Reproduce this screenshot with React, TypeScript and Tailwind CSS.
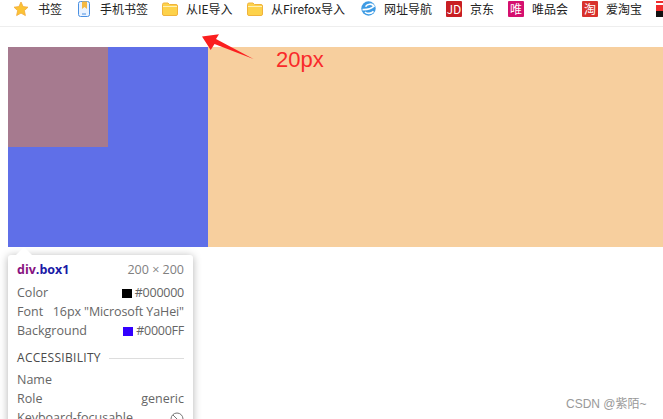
import React from 'react';

const cn = '"Noto Sans CJK SC", "Noto Sans", sans-serif';

const Folder = () => (
  <svg width="16" height="14" viewBox="0 0 16 14">
    <path d="M0.5 2.5 Q0.5 1 2 1 H6 L7.5 2.5 H14 Q15.5 2.5 15.5 4 V12 Q15.5 13.5 14 13.5 H2 Q0.5 13.5 0.5 12 Z" fill="#fdd24a" stroke="#f0b33c" />
    <path d="M1 4.5 H15" stroke="#fff0b8" />
  </svg>
);

const Star = () => (
  <svg width="16" height="16" viewBox="0 0 16 16">
    <path d="M8 1 L10.1 5.6 L15 6.2 L11.4 9.6 L12.4 14.6 L8 12.1 L3.6 14.6 L4.6 9.6 L1 6.2 L5.9 5.6 Z" fill="#fbc334" stroke="#f3a93a" strokeWidth="0.8" strokeLinejoin="round" />
  </svg>
);

const Phone = () => (
  <svg width="12" height="16" viewBox="0 0 12 16">
    <rect x="0.5" y="0.5" width="11" height="15" rx="2" fill="#eaf3ff" stroke="#4a90e2" />
    <path d="M4 0.5 H9 V8 L6.5 6 L4 8 Z" fill="#f5b942" />
    <path d="M4 13 H8" stroke="#4a90e2" />
  </svg>
);

// blue "e" browser logo
const Globe = () => (
  <svg width="15" height="15" viewBox="0 0 15 15">
    <circle cx="7.5" cy="7.5" r="7.2" fill="#3d9be4" />
    <path d="M1.5 8.6 C6 8.8 10.5 7.6 13 5.2 C11 2.4 6.5 2.6 4.5 5.6 M4 11 C6 13 10 13 12.5 10.4" stroke="#ffffff" strokeWidth="1.7" fill="none" />
  </svg>
);

const Badge = ({ bg, label }: { bg: string; label: string }) => (
  <span className="flex h-4 w-4 items-center justify-center overflow-hidden rounded-[1px] text-[12px] leading-none text-white" style={{ background: bg }}>
    {label}
  </span>
);

const bookmarks = [
  { icon: <Star />, label: '书签', w: 'w-[65px]', iw: 'w-[25px]' },
  { icon: <Phone />, label: '手机书签', w: 'w-[84px]', iw: 'w-[22px]' },
  { icon: <Folder />, label: '从IE导入', w: 'w-[85px]', iw: 'w-[24px]' },
  { icon: <Folder />, label: '从Firefox导入', w: 'w-[114px]', iw: 'w-[24px]' },
  { icon: <Globe />, label: '网址导航', w: 'w-[85px]', iw: 'w-[23px]' },
  { icon: <Badge bg="#c81e23" label="JD" />, label: '京东', w: 'w-[62px]', iw: 'w-[24px]' },
  { icon: <Badge bg="#d5106f" label="唯" />, label: '唯品会', w: 'w-[74px]', iw: 'w-[24px]' },
  { icon: <Badge bg="#d8322c" label="淘" />, label: '爱淘宝', w: 'w-[74px]', iw: 'w-[24px]' },
];

const Row = ({ label, children }: { label: string; children: React.ReactNode }) => (
  <div className="flex h-[19px] items-center justify-between text-[12.5px] text-[#666666]">
    <span>{label}</span>
    {children}
  </div>
);

export default function App() {
  return (
    <div className="relative h-[419px] w-[663px] overflow-hidden bg-white" style={{ fontFamily: '"Open Sans", "Noto Sans CJK SC", sans-serif' }}>
      {/* Bookmarks bar */}
      <div className="flex h-[27px] items-center overflow-hidden whitespace-nowrap border-b border-[#eeeeee] pl-[13px] pb-[9px] text-[12px] text-[#222222]" style={{ fontFamily: cn }}>
        {bookmarks.map(b => (
          <div key={b.label} className={`flex shrink-0 items-center ${b.w}`}>
            <span className={`flex shrink-0 items-center ${b.iw}`}>{b.icon}</span>
            <span>{b.label}</span>
          </div>
        ))}
        <div className="flex h-4 w-4 shrink-0 flex-col">
          <span className="h-[2px] bg-[#f02b2b]" />
          <span className="h-[2px] bg-white" />
          <span className="h-[6px] bg-[#f02b2b]" />
          <span className="h-[6px] bg-[#111111]" />
        </div>
      </div>

      {/* Page content */}
      <div className="mt-5 flex pl-2">
        <div className="h-[200px] w-[200px] shrink-0 bg-[#5f6fe8]">
          <div className="h-[100px] w-[100px] bg-[#a67a8f]" />
        </div>
        <div className="h-[200px] flex-1 bg-[#f7cf9e]" />
      </div>

      {/* Annotation */}
      <svg className="absolute left-[200px] top-[30px]" width="60" height="32" viewBox="0 0 60 32">
        <path d="M2 6.5 L19 4.3 L16 9 L53.5 29 L14.5 14 L10.7 20 Z" fill="#fb1f1f" />
      </svg>
      <span className="absolute left-[276px] top-[45px] text-[22px] leading-[29px] text-[#f92a2a]" style={{ fontFamily: '"Liberation Sans", sans-serif' }}>20px</span>

      {/* Devtools inspect tooltip */}
      <div className="absolute left-[8px] top-[255px] h-[180px] w-[185px] rounded-[3px] bg-white px-[9px] pt-[6px] shadow-[0_1px_8px_rgba(0,0,0,0.3)]">
        <div className="absolute -top-[8px] left-[8px] h-0 w-0 border-x-[8px] border-b-[8px] border-x-transparent border-b-white" />
        <div className="flex h-[19px] items-center justify-between text-[12.5px]">
          <span className="font-bold"><span className="text-[#881280]">div</span><span className="text-[#1a1aa6]">.box1</span></span>
          <span className="text-[#808080]">200 × 200</span>
        </div>
        <div className="mt-[4px]">
          <Row label="Color">
            <span className="flex items-center tracking-[-0.25px]"><span className="mr-[3px] h-[9px] w-[10px] bg-black" />#000000</span>
          </Row>
          <Row label="Font">
            <span className="tracking-[-0.1px]">16px "Microsoft YaHei"</span>
          </Row>
          <Row label="Background">
            <span className="flex items-center tracking-[-0.25px]"><span className="mr-[3px] h-[9px] w-[10px] bg-[#3300ff]" />#0000FF</span>
          </Row>
        </div>
        <div className="mt-[8px] flex h-[18px] items-center gap-2 text-[12px] tracking-[0.3px] text-[#4a4a4a]">
          <span>ACCESSIBILITY</span>
          <span className="h-px flex-1 bg-[#dddddd]" />
        </div>
        <div className="mt-[4px]">
          <Row label="Name"><span /></Row>
          <Row label="Role"><span>generic</span></Row>
          <Row label="Keyboard-focusable">
            <svg width="14" height="14" viewBox="0 0 14 14" fill="none" stroke="#777777">
              <circle cx="7" cy="7" r="6" />
              <path d="M3 3 L11 11" />
            </svg>
          </Row>
        </div>
      </div>

      {/* Watermark */}
      <span className="absolute left-[566px] top-[395px] text-[12px] leading-[18px] text-[#999999]" style={{ fontFamily: '"Liberation Sans", "Noto Sans CJK SC", sans-serif' }}>CSDN @紫陌~</span>
    </div>
  );
}
